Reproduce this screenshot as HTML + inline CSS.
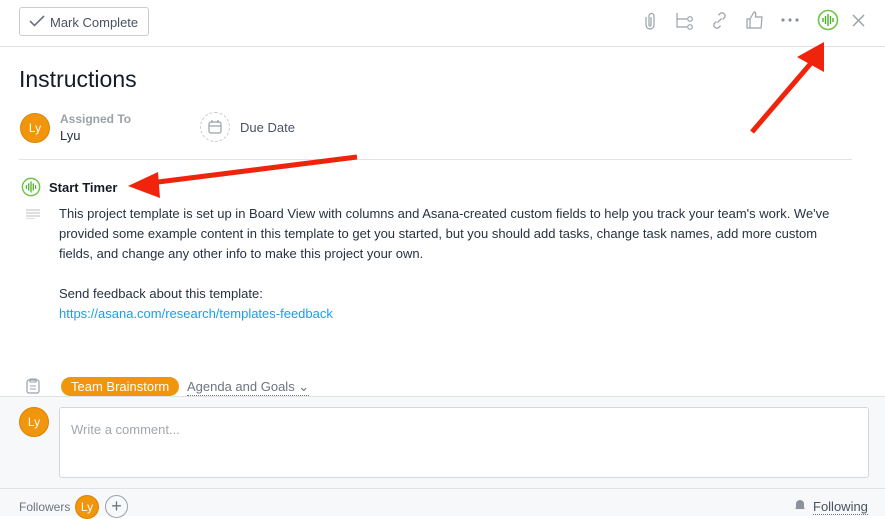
<!DOCTYPE html>
<html><head><meta charset="utf-8"><style>
*{box-sizing:border-box;margin:0;padding:0}
body{width:885px;height:516px;overflow:hidden;background:#fff;font-family:"Liberation Sans",sans-serif;position:relative;color:#151b26}
.a{position:absolute}
.av{position:absolute;border-radius:50%;background:#f1950c;color:#fff;font-size:12px;display:flex;align-items:center;justify-content:center;border:1px solid #d98407}
.ic{position:absolute;stroke:#9aa2aa;fill:none;stroke-width:1.2}
p{font-size:13px;line-height:20px;color:#273240}
</style></head><body>
<div class="a" style="left:19px;top:7px;width:130px;height:29px;border:1px solid #c9cdd1;border-radius:3px;font-size:13px;color:#4a5360;padding:7px 0 0 30px">Mark Complete</div>
<svg class="a" style="left:29px;top:14px" width="16" height="14" viewBox="0 0 16 14"><path d="M1 7l4.5 4.5L15 2" stroke="#6d7580" stroke-width="1.6" fill="none"/></svg>
<div class="a" style="left:0;top:46px;width:885px;height:1px;background:#e0e3e6"></div>
<svg class="ic" style="left:643px;top:11px" width="14" height="20" viewBox="0 0 14 20"><path d="M3 6v8a4 4 0 008 0V5a2.5 2.5 0 00-5 0v9a1 1 0 002 0V6"/></svg>
<svg class="ic" style="left:675px;top:11px" width="20" height="20" viewBox="0 0 20 20"><path d="M2 2v14h10M2 8h10"/><circle cx="15" cy="8" r="2.3"/><circle cx="15" cy="16" r="2.3"/></svg>
<svg class="ic" style="left:709px;top:10px" width="21" height="21" viewBox="0 0 20 20"><path d="M8 12l4-4M9 5l2-2a3 3 0 014 4l-2 2M11 15l-2 2a3 3 0 01-4-4l2-2"/></svg>
<svg class="ic" style="left:745px;top:10px" width="20" height="20" viewBox="0 0 20 20"><path d="M2 9h3v9H2zM5 9l4-7c2 0 2 2 1.5 5H17l-1 11H5"/></svg>
<svg class="a" style="left:780px;top:17px" width="20" height="6"><circle cx="3" cy="3" r="1.6" fill="#8a939c"/><circle cx="10" cy="3" r="1.6" fill="#8a939c"/><circle cx="17" cy="3" r="1.6" fill="#8a939c"/></svg>
<svg class="a" style="left:817px;top:9px" width="22" height="22" viewBox="0 0 22 22"><circle cx="11" cy="11" r="9.5" stroke="#6cc644" stroke-width="1.6" fill="none"/><path d="M6 9v4M8.5 7v8M11 5v12M13.5 7v8M16 9v4" stroke="#4cae2c" stroke-width="1.4"/></svg>
<svg class="ic" style="left:851px;top:13px" width="15" height="15" viewBox="0 0 15 15"><path d="M2 2l11 11M13 2L2 13" stroke-width="1.5"/></svg>
<div class="a" style="left:19px;top:66px;font-size:23px;color:#151b26">Instructions</div>
<div class="av" style="left:20px;top:113px;width:30px;height:30px">Ly</div>
<div class="a" style="left:60px;top:112px;font-size:12px;color:#9ca1a7;font-weight:bold">Assigned To</div>
<div class="a" style="left:60px;top:128px;font-size:13px;color:#273240">Lyu</div>
<div class="a" style="left:200px;top:112px;width:30px;height:30px;border-radius:50%;border:1px dashed #c9cdd1"></div>
<svg class="ic" style="left:207px;top:119px" width="16" height="16" viewBox="0 0 16 16"><rect x="2" y="3" width="12" height="11" rx="2"/><path d="M2 7h12M5 1v3M11 1v3"/></svg>
<div class="a" style="left:240px;top:120px;font-size:13px;color:#4a5360">Due Date</div>
<div class="a" style="left:19px;top:159px;width:833px;height:1px;background:#e0e3e6"></div>
<svg class="a" style="left:21px;top:177px" width="20" height="20" viewBox="0 0 22 22"><circle cx="11" cy="11" r="9.5" stroke="#6cc644" stroke-width="1.6" fill="none"/><path d="M6 9v4M8.5 7v8M11 5v12M13.5 7v8M16 9v4" stroke="#4cae2c" stroke-width="1.4"/></svg>
<div class="a" style="left:49px;top:180px;font-size:13px;font-weight:bold">Start Timer</div>
<svg class="a" style="left:26px;top:209px" width="14" height="10"><path d="M0 1h14M0 4h14M0 7h14M0 10h9" stroke="#b8bdc2"/></svg>
<div class="a" style="left:59px;top:204px;width:790px"><p>This project template is set up in Board View with columns and Asana-created custom fields to help you track your team's work. We've provided some example content in this template to get you started, but you should add tasks, change task names, add more custom fields, and change any other info to make this project your own.</p><p>&nbsp;</p><p>Send feedback about this template:<br><span style="color:#1a9ee6">https://asana.com/research/templates-feedback</span></p></div>
<svg class="ic" style="left:26px;top:378px" width="14" height="16" viewBox="0 0 14 16"><rect x="1" y="2" width="12" height="13" rx="2"/><path d="M4 1h6v3H4zM4 8h6M4 11h6" stroke-width="1.1"/></svg>
<div class="a" style="left:61px;top:377px;height:19px;padding:0 10px;border-radius:10px;background:#f1950c;color:#fff;font-size:13px;line-height:19px">Team Brainstorm</div>
<div class="a" style="left:187px;top:379px;font-size:13px;color:#6d7580;border-bottom:1px dotted #6d7580">Agenda and Goals ⌄</div>
<div class="a" style="left:0;top:396px;width:885px;height:120px;background:#f6f8f9;border-top:1px solid #e0e3e6"></div>
<div class="av" style="left:19px;top:407px;width:30px;height:30px">Ly</div>
<div class="a" style="left:59px;top:407px;width:810px;height:71px;background:#fff;border:1px solid #d5d8db;border-radius:3px;font-size:13px;color:#a2a7ad;padding:14px 0 0 11px">Write a comment...</div>
<div class="a" style="left:0;top:488px;width:885px;height:1px;background:#e0e3e6"></div>
<div class="a" style="left:19px;top:500px;font-size:12px;color:#6d7580">Followers</div>
<div class="av" style="left:75px;top:495px;width:24px;height:24px">Ly</div>
<div class="a" style="left:105px;top:495px;width:23px;height:23px;border-radius:50%;border:1px solid #9ca1a7;color:#6d7580;font-size:18px;line-height:20px;text-align:center">+</div>
<svg class="a" style="left:793px;top:498px" width="14" height="14" viewBox="0 0 14 14"><path d="M3 10V6a4 4 0 018 0v4l1 1H2z" fill="#8a939c"/></svg>
<div class="a" style="left:813px;top:499px;font-size:13px;color:#4a5360;border-bottom:1px dotted #6d7580">Following</div>
<svg class="a" style="left:0;top:0" width="885" height="516"><g fill="#f0240c" stroke="#f0240c" stroke-width="5"><path d="M752 132L812 62" /><path d="M357 157L150 183"/></g><polygon points="824,42 824,72 797,57" fill="#f0240c"/><polygon points="128,186 158,172 160,198" fill="#f0240c"/></svg>
</body></html>
